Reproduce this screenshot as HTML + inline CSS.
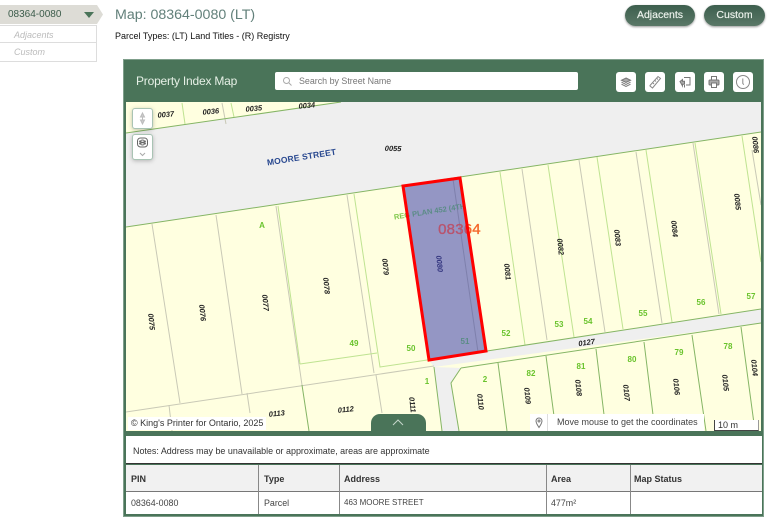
<!DOCTYPE html>
<html><head><meta charset="utf-8"><style>
*{box-sizing:border-box}
html,body{margin:0;padding:0;width:768px;height:518px;overflow:hidden;background:#fff;font-family:"Liberation Sans",sans-serif}
#w{position:absolute;left:0;top:0;width:768px;height:518px;filter:blur(.3px)}
.a{position:absolute}
.btn{position:absolute;top:5px;height:21px;border-radius:11px;background:linear-gradient(#3d5f4e,#5a7867);color:#eef4ee;font-size:10.5px;line-height:20px;text-align:center;box-shadow:0 1px 2px #999;-webkit-text-stroke:.15px #eef4ee}
.ib{position:absolute;top:72px;width:20px;height:20px;background:#fff;border-radius:3px}
.ib svg{display:block}
.cell{position:absolute;font-size:8.900px;color:#444;white-space:nowrap}
.th{font-weight:bold;color:#333;font-size:9px}
.mc{position:absolute;left:132px;width:21px;background:#fff;border:1px solid #a9c4b4;border-radius:3px;box-shadow:0 1px 4px rgba(0,0,0,.25)}
text{font-family:"Liberation Sans",sans-serif}
.n{font:italic bold 7.500px "Liberation Sans",sans-serif;fill:#222;text-anchor:middle}
.g{font:bold 8px "Liberation Sans",sans-serif;fill:#69c32c;text-anchor:middle}
</style></head><body><div id="w">

<svg class="a" style="left:0;top:0" width="104" height="26"><polygon points="0,5 97,5 103,14.500 97,24 0,24" fill="#dddcd6"/><polygon points="84,12 94,12 89,18" fill="#4a7459"/></svg>
<div class="a" style="left:8px;top:9px;font-size:10px;color:#3c5c4b">08364-0080</div>
<div class="a" style="left:0;top:25px;width:97px;height:18px;border:1px solid #ddd;border-left:0;font:italic 9px 'Liberation Sans';color:#bbb;padding:4px 0 0 14px">Adjacents</div>
<div class="a" style="left:0;top:43px;width:97px;height:19px;border:1px solid #ddd;border-top:0;border-left:0;font:italic 9px 'Liberation Sans';color:#bbb;padding:4px 0 0 14px">Custom</div>
<div class="a" style="left:115px;top:7px;font-size:14.200px;color:#62807a;white-space:nowrap">Map: 08364-0080 (LT)</div>
<div class="a" style="left:115px;top:31px;font-size:9px;color:#111;white-space:nowrap">Parcel Types: (LT) Land Titles - (R) Registry</div>
<div class="btn" style="left:625px;width:70px">Adjacents</div>
<div class="btn" style="left:704px;width:61px">Custom</div>

<div class="a" style="left:123px;top:59px;width:641px;height:458px;background:#4a7459;border:1px solid #7f9f8b"></div>
<div class="a" style="left:136px;top:74px;font-size:12px;letter-spacing:-.2px;color:#e6f0e6;white-space:nowrap">Property Index Map</div>
<div class="a" style="left:275px;top:72px;width:303px;height:18px;background:#fff;border-radius:2px;font-size:8.900px;color:#777;padding:4px 0 0 24px">Search by Street Name</div>
<svg class="a" style="left:282px;top:76px" width="10" height="10" fill="none" stroke="#aaa" stroke-width="1"><circle cx="4.500" cy="4.500" r="3"/><path d="M7 7l2.500 2.500"/></svg>

<div class="ib" style="left:616px"><svg width="20" height="20" fill="none" stroke="#777" stroke-width="1"><path d="M10 6l4.500 2.200L10 10.400 5.500 8.200z" fill="#aaa"/><path d="M5.500 10.200l4.500 2.200 4.500-2.200M5.500 12.200l4.500 2.200 4.500-2.200"/></svg></div>
<div class="ib" style="left:645px"><svg width="20" height="20" fill="none" stroke="#888" stroke-width="1"><path d="M5 13.500L13 4.500l2.500 2-8 9.500-2.500-2z"/><path d="M8 11l1 1M10 8.500l1 1M12 6.500l1 1"/></svg></div>
<div class="ib" style="left:675px"><svg width="20" height="20" fill="none" stroke="#777" stroke-width="1"><path d="M9 5.500h6v7.500H11"/><path d="M5 9.500l2.500-2v1.700h2v3H7.500v1.800z" fill="#aaa"/><path d="M9.500 13v2.500"/></svg></div>
<div class="ib" style="left:704px"><svg width="20" height="20" fill="none" stroke="#777" stroke-width="1"><path d="M7.500 8V4.500h5V8"/><rect x="5" y="8" width="10" height="5" rx="1" fill="#aaa"/><rect x="7.500" y="11" width="5" height="4.500" fill="#fff"/></svg></div>
<div class="ib" style="left:733px"><svg width="20" height="20" fill="none" stroke="#888" stroke-width="1"><circle cx="10" cy="10" r="6.500"/><path d="M9.800 6.500v5l1 1.200"/></svg></div>

<svg class="a" style="left:126px;top:102px" width="635" height="329" viewBox="126 102 635 329">
<defs><clipPath id="pc"><polygon points="403,186 460,178 486,351 429,360"/></clipPath></defs>
<rect x="126" y="102" width="635" height="329" fill="#ffffe0"/>
<polygon points="126,133 341,102 761,102 761,132 126,227" fill="#efefef"/>
<polygon points="434,367 761,323 761,309 487,351 429,360" fill="#efefef"/>
<polygon points="434,367 461,368 451,383 459,431 442,431" fill="#efefef"/>
<g fill="none" stroke="#c9c9b6" stroke-width="1">
<path d="M152,224L180,403M216,215L242,394M276,206L302,385M347,195L374,373M376,375L382,413M126,412L434,366M247,393L250,413M169,405L172,431"/>
<path d="M522,169L547,340M579,160L605,332M636,152L662,323M693,143L719,314M752,150L761,205M222,103L226,124"/>
</g>
<g fill="none" stroke="#bfe391" stroke-width="1">
<path d="M278,206L300,364M354,194L380,367L434,359M300,364L377,353"/>
<path d="M500,172L525,345M548,165L574,337M597,157L623,329M646,150L672,322M695,143L721,314M742,136L761,262M182,103L185,124M231,103L234,117"/>
</g>
<g fill="none" stroke="#85b565" stroke-width="1">
<path d="M126,133L341,102M126,227L761,132"/>
<path d="M487,351L761,309M461,368L761,323M434,367L442,431M461,368L451,383L459,431"/>
<path d="M302,385L309,431M498,363L507,431M546,356L556,431M596,349L606,431M644,342L655,431M692,335L706,431M741,327L755,431"/>
</g>

<g class="lbl">
<text class="n" transform="translate(166,117) rotate(-5)">0037</text>
<text class="n" transform="translate(211,114) rotate(-5)">0036</text>
<text class="n" transform="translate(254,111) rotate(-5)">0035</text>
<text class="n" transform="translate(307,108) rotate(-5)">0034</text>
<text transform="translate(302,160) rotate(-9)" text-anchor="middle" style="font:bold 8.500px 'Liberation Sans';fill:#27478f;letter-spacing:.15px">MOORE STREET</text>
<text class="n" transform="translate(393,151) rotate(2)">0055</text>
<text class="g" x="262" y="228">A</text>
<text transform="translate(430,214) rotate(-9)" text-anchor="middle" style="font:bold 7.500px 'Liberation Sans';fill:#7fc84a">REG PLAN 452 (4TH</text>
<text x="459.500" y="234" text-anchor="middle" style="font:15px 'Liberation Sans';fill:#f5692c;stroke:#f5692c;stroke-width:.35;letter-spacing:.2px">08364</text>
</g>
<polygon points="403,186 460,178 486,351 429,360" fill="#9496c4"/>
<path d="M453,179L478,352" stroke="#7e80ac" stroke-width="1" fill="none"/>
<g clip-path="url(#pc)">
<text transform="translate(430,214) rotate(-9)" text-anchor="middle" style="font:bold 7.500px 'Liberation Sans';fill:#5b8c86">REG PLAN 452 (4TH</text>
<text x="459.500" y="234" text-anchor="middle" style="font:15px 'Liberation Sans';fill:#b8546e;stroke:#b8546e;stroke-width:.35;letter-spacing:.2px">08364</text>
</g>
<polygon points="403,186 460,178 486,351 429,360" fill="none" stroke="#f00" stroke-width="3"/>

<g>
<text class="n" transform="translate(149,322) rotate(84)">0075</text>
<text class="n" transform="translate(200,313) rotate(84)">0076</text>
<text class="n" transform="translate(263,303) rotate(84)">0077</text>
<text class="n" transform="translate(324,286) rotate(84)">0078</text>
<text class="n" transform="translate(383,267) rotate(84)">0079</text>
<text class="n" transform="translate(437,264) rotate(84)" style="fill:#33357f">0080</text>
<text class="n" transform="translate(505,272) rotate(84)">0081</text>
<text class="n" transform="translate(558,247) rotate(84)">0082</text>
<text class="n" transform="translate(615,238) rotate(84)">0083</text>
<text class="n" transform="translate(672,229) rotate(84)">0084</text>
<text class="n" transform="translate(735,202) rotate(84)">0085</text>
<text class="n" transform="translate(753,145) rotate(84)">0086</text>
<text class="n" transform="translate(478,402) rotate(84)">0110</text>
<text class="n" transform="translate(525,396) rotate(84)">0109</text>
<text class="n" transform="translate(576,388) rotate(84)">0108</text>
<text class="n" transform="translate(624,393) rotate(84)">0107</text>
<text class="n" transform="translate(674,387) rotate(84)">0106</text>
<text class="n" transform="translate(723,383) rotate(84)">0105</text>
<text class="n" transform="translate(752,368) rotate(84)">0104</text>
<text class="n" transform="translate(410,405) rotate(84)">0111</text>
<text class="n" transform="translate(277,416) rotate(-6)">0113</text>
<text class="n" transform="translate(346,412) rotate(-6)">0112</text>
<text class="n" transform="translate(587,345) rotate(-9)">0127</text>
<g>
<text class="g" x="354" y="346">49</text><text class="g" x="411" y="351">50</text><text class="g" x="427" y="384">1</text>
<text class="g" x="465" y="344" style="fill:#5b8c86">51</text><text class="g" x="506" y="336">52</text><text class="g" x="559" y="327">53</text>
<text class="g" x="588" y="324">54</text><text class="g" x="643" y="316">55</text><text class="g" x="701" y="305">56</text>
<text class="g" x="751" y="299">57</text><text class="g" x="485" y="382">2</text><text class="g" x="531" y="376">82</text>
<text class="g" x="581" y="369">81</text><text class="g" x="632" y="362">80</text><text class="g" x="679" y="355">79</text><text class="g" x="728" y="349">78</text>
</g>
</g>
</svg>

<div class="mc" style="top:108px;height:21px"><svg width="19" height="19" fill="none" stroke="#bbb"><path d="M9.500 4v11"/><path d="M7.500 8l2-4 2 4zM7.500 11l2 4 2-4z" fill="#ccc"/></svg></div>
<div class="mc" style="top:134px;height:26px"><svg width="19" height="24" fill="none" stroke="#666" stroke-width="1"><rect x="4.500" y="3" width="10" height="9" rx="3"/><circle cx="9.500" cy="7.500" r="2.500"/><path d="M6 9l7-3M6 6l7 3"/><path d="M7 18l2.500 2.500 2.500-2.500" stroke="#aaa"/></svg></div>

<div class="a" style="left:128px;top:417px;width:138px;height:13px;background:#fff;font-size:9px;line-height:13px;color:#333;padding-left:3px;white-space:nowrap">© King's Printer for Ontario, 2025</div>
<div class="a" style="left:371px;top:414px;width:55px;height:17px;background:#4a7459;border-radius:9px 9px 0 0"></div>
<svg class="a" style="left:391px;top:418px" width="14" height="9" fill="none" stroke="#c5d6ca" stroke-width="1"><path d="M2 7l5-5 5 5"/></svg>
<div class="a" style="left:530px;top:414px;width:174px;height:17px;background:#fff"></div>
<div class="a" style="left:547px;top:414px;width:1px;height:17px;background:#ddd"></div>
<svg class="a" style="left:534px;top:416px" width="10" height="13" fill="none" stroke="#777"><path d="M5 11.500C3 8.500 2 7 2 5a3 3 0 0 1 6 0c0 2-1 3.500-3 6.500z"/><circle cx="5" cy="5" r="1"/></svg>
<div class="a" style="left:557px;top:417px;font-size:9px;color:#444;white-space:nowrap">Move mouse to get the coordinates</div>
<div class="a" style="left:714px;top:420px;width:45px;height:11px;background:#fff;border-left:1px solid #444;border-right:1px solid #999;border-bottom:1px solid #444;font-size:9px;line-height:11px;color:#333;padding-left:3px">10 m</div>

<div class="a" style="left:126px;top:436px;width:636px;height:28px;background:#fff;border-bottom:1px solid #333"></div>
<div class="cell" style="left:133px;top:446px;color:#333;font-size:8.950px">Notes: Address may be unavailable or approximate, areas are approximate</div>

<div class="a" style="left:126px;top:465px;width:636px;height:26px;background:#f1f1f1"></div>
<div class="a" style="left:126px;top:491px;width:636px;height:23px;background:#fff;border-top:1px solid #777"></div>
<div class="a" style="left:258px;top:465px;width:1px;height:49px;background:#888"></div>
<div class="a" style="left:339px;top:465px;width:1px;height:49px;background:#888"></div>
<div class="a" style="left:546px;top:465px;width:1px;height:49px;background:#888"></div>
<div class="a" style="left:630px;top:465px;width:1px;height:49px;background:#888"></div>
<div class="cell th" style="left:131px;top:474px">PIN</div>
<div class="cell th" style="left:264px;top:474px">Type</div>
<div class="cell th" style="left:344px;top:474px">Address</div>
<div class="cell th" style="left:551px;top:474px">Area</div>
<div class="cell th" style="left:634px;top:474px">Map Status</div>
<div class="cell" style="left:131px;top:498px">08364-0080</div>
<div class="cell" style="left:264px;top:498px">Parcel</div>
<div class="cell" style="left:344px;top:498px;font-size:8px">463 MOORE STREET</div>
<div class="cell" style="left:551px;top:498px">477m²</div>
</div></body></html>
